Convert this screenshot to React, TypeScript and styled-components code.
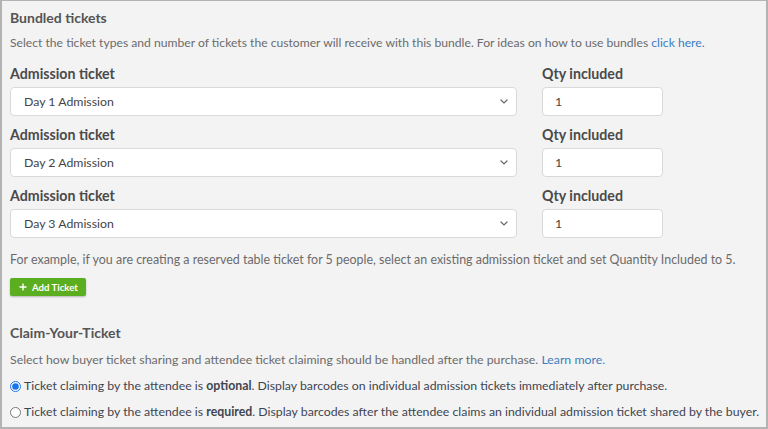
import React from "react";
import styled, {createGlobalStyle} from "styled-components";

const GlobalStyle = createGlobalStyle`
  html, body {
    margin: 0;
    padding: 0;
    background: #fff;
  }
  body {
    font-family: Lato, "Open Sans", sans-serif;
  }
`;

const tickets = ["Day 1 Admission", "Day 2 Admission", "Day 3 Admission"];

const Chevron = () => (
  <svg width="8" height="5" viewBox="0 0 8 5" fill="none">
    <path d="M1 1l3 3 3-3" stroke="#666" strokeWidth="1.2" strokeLinecap="round" />
  </svg>
);

const PlusIcon = () => (
  <svg width="8" height="8" viewBox="0 0 8 8">
    <path d="M4 0.5v7M0.5 4h7" stroke="#fff" strokeWidth="1.4" />
  </svg>
);

const App = () => {
  return (
    <>
      <GlobalStyle />
      <Frame>
        <SectionTitle>Bundled tickets</SectionTitle>
        <Help $size={12.15}>
          Select the ticket types and number of tickets the customer will receive with this bundle. For ideas on how
          to use bundles <Link>click here.</Link>
        </Help>
        <Rows>
          {tickets.map((name) => (
            <TicketRow key={name}>
              <Field>
                <Label>Admission ticket</Label>
                <SelectWrap>
                  <Select defaultValue={name}>
                    <option>{name}</option>
                  </Select>
                  <ChevronBox>
                    <Chevron />
                  </ChevronBox>
                </SelectWrap>
              </Field>
              <Field>
                <Label>Qty included</Label>
                <QtyInput defaultValue="1" />
              </Field>
            </TicketRow>
          ))}
        </Rows>
        <Example $size={12.45}>
          For example, if you are creating a reserved table ticket for 5 people, select an existing admission ticket and
          set Quantity Included to 5.
        </Example>
        <AddButton>
          <PlusIcon />
          Add Ticket
        </AddButton>
        <ClaimTitle>Claim-Your-Ticket</ClaimTitle>
        <ClaimHelp>
          Select how buyer ticket sharing and attendee ticket claiming should be handled after the purchase.{" "}
          <Link>Learn more.</Link>
        </ClaimHelp>
        <RadioList>
          <RadioRow>
            <Radio type="radio" name="claim" defaultChecked />
            <span>
              Ticket claiming by the attendee is <b>optional</b>. Display barcodes on individual admission tickets
              immediately after purchase.
            </span>
          </RadioRow>
          <RadioRow>
            <Radio type="radio" name="claim" />
            <span>
              Ticket claiming by the attendee is <b>required</b>. Display barcodes after the attendee claims an
              individual admission ticket shared by the buyer.
            </span>
          </RadioRow>
        </RadioList>
      </Frame>
    </>
  );
};

const Frame = styled.div`
  box-sizing: border-box;
  width: 768px;
  height: 429px;
  background: #f3f3f3;
  border: 2px solid #b3b3b3;
  border-top-width: 1px;
  padding: 8px 8px 0 8px;
  overflow: hidden;
`;

const SectionTitle = styled.div`
  font-size: 14px;
  font-weight: 700;
  line-height: 18px;
  color: #555;
`;

const ClaimTitle = styled(SectionTitle)`
  margin-top: 28px;
`;

const Help = styled.div<{$size?: number}>`
  margin-top: 8px;
  font-size: ${({$size}) => $size ?? 12.3}px;
  line-height: 16px;
  color: #6b6b6b;
  white-space: nowrap;
`;

const ClaimHelp = styled(Help)`
  margin-top: 10px;
`;

const Link = styled.a`
  color: #3b7dc1;
  cursor: pointer;
`;

const Rows = styled.div`
  margin-top: 14px;
  display: flex;
  flex-direction: column;
  gap: 10px;
`;

const TicketRow = styled.div`
  display: grid;
  grid-template-columns: 507px 121px;
  column-gap: 25px;
`;

const Field = styled.div`
  display: flex;
  flex-direction: column;
  gap: 4px;
`;

const Label = styled.div`
  font-size: 14.2px;
  font-weight: 700;
  line-height: 18px;
  color: #4a4a4a;
`;

const SelectWrap = styled.div`
  position: relative;
`;

const inputBase = `
  box-sizing: border-box;
  width: 100%;
  height: 29px;
  background: #fff;
  border: 1px solid #d9d9d9;
  border-radius: 4px;
  padding: 0 13px;
  font-family: Lato, "Open Sans", sans-serif;
  font-size: 12.3px;
  color: #444;
  outline: none;
`;

const Select = styled.select`
  ${inputBase}
  appearance: none;
`;

const ChevronBox = styled.span`
  position: absolute;
  right: 9px;
  top: 12px;
  display: flex;
  pointer-events: none;
`;

const QtyInput = styled.input`
  ${inputBase}
  padding: 0 12px;
`;

const Example = styled(Help)`
  margin-top: 14px;
`;

const AddButton = styled.button`
  margin-top: 10px;
  display: flex;
  align-items: center;
  gap: 5px;
  height: 18px;
  padding: 0 8px 0 9px;
  background: #5aae1f;
  border: none;
  border-radius: 2px;
  box-shadow: 0 1px 2px rgba(0, 0, 0, 0.25);
  color: #fff;
  font-family: Lato, "Open Sans", sans-serif;
  font-size: 9.6px;
  font-weight: 700;
`;

const RadioList = styled.div`
  margin-top: 10px;
  display: flex;
  flex-direction: column;
  gap: 10px;
`;

const RadioRow = styled.label`
  display: flex;
  align-items: center;
  gap: 3px;
  font-size: 12.3px;
  line-height: 16px;
  color: #3f4550;
  white-space: nowrap;
  b {
    font-weight: 700;
  }
`;

const Radio = styled.input`
  margin: 0;
  width: 11px;
  height: 11px;
  accent-color: #1a73e8;
`;

export default App;
